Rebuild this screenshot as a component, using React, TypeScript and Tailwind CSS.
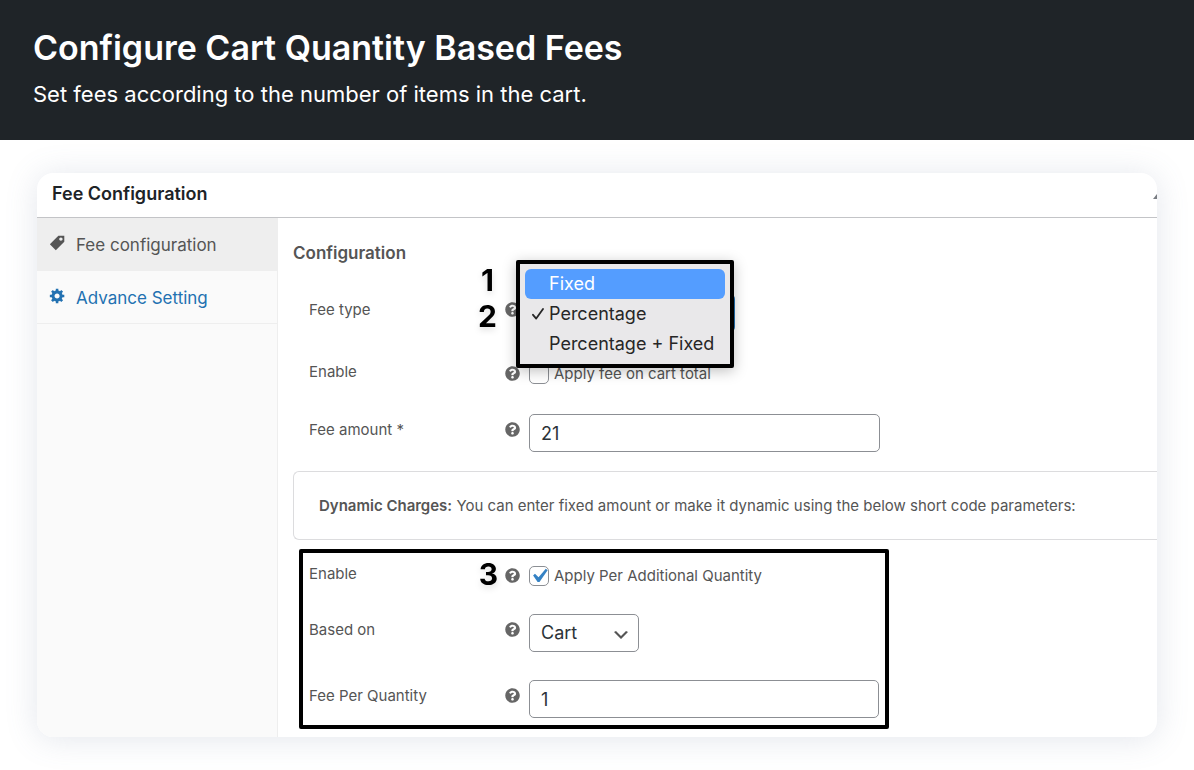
import { ReactNode, useState } from "react";
import clsx from "clsx";
import { FaQuestionCircle } from "react-icons/fa";

interface FieldRowProps {
  label: string;
  htmlFor: string;
  marker?: ReactNode;
  compact?: boolean;
  children: ReactNode;
}

const feeTypes = ["Fixed", "Percentage", "Percentage + Fixed"];

const inputClass =
  "h-[38px] w-[351px] rounded-[5px] border border-[#8c8f94] bg-white px-[11px] text-lg text-[#2c3338]";

function TagIcon() {
  return (
    <svg viewBox="0 0 20 20" className="mb-1.5 size-[17px] fill-current" aria-hidden="true">
      <path d="M11 2h7v7L8 19l-7-7L11 2zm3 6c1.1 0 2-.9 2-2s-.9-2-2-2-2 .9-2 2 .9 2 2 2z" />
    </svg>
  );
}

function GearIcon() {
  return (
    <svg viewBox="0 0 20 20" className="mb-1.5 size-[17px] fill-current" aria-hidden="true">
      <path d="M18 12h-2.18c-.17.7-.44 1.35-.81 1.93l1.54 1.54-2.1 2.1-1.54-1.54c-.58.36-1.23.63-1.91.79V19H8v-2.18c-.68-.16-1.33-.43-1.91-.79l-1.54 1.54-2.12-2.12 1.54-1.54c-.36-.58-.63-1.23-.79-1.91H1V9.03h2.17c.16-.7.44-1.35.8-1.94L2.43 5.55l2.1-2.1 1.54 1.54c.58-.37 1.24-.64 1.93-.81V2h3v2.18c.68.16 1.33.43 1.91.79l1.54-1.54 2.12 2.12-1.54 1.54c.36.59.64 1.24.8 1.94H18V12zm-8.5 1.5c1.66 0 3-1.34 3-3s-1.34-3-3-3-3 1.34-3 3 1.34 3 3 3z" />
    </svg>
  );
}

function FieldRow({ label, htmlFor, marker, compact, children }: FieldRowProps) {
  return (
    <div className="flex items-start">
      <label
        htmlFor={htmlFor}
        className={clsx("w-[170px] shrink-0 text-[15px] leading-5", !compact && "mt-1.5")}
      >
        {label}
      </label>
      <div className="relative w-[26px] shrink-0">{marker}</div>
      <FaQuestionCircle
        className={clsx("mr-[9px] size-[15px] shrink-0 text-[#666]", compact ? "mt-1" : "mt-2")}
      />
      {children}
    </div>
  );
}

function Marker({ children }: { children: ReactNode }) {
  return (
    <span className="block text-3xl leading-9 font-bold text-black drop-shadow-md">{children}</span>
  );
}

function CheckField({ id, text, defaultChecked }: { id: string; text: string; defaultChecked?: boolean }) {
  return (
    <div className="flex items-center gap-[5px] pt-0.5">
      <span className="relative flex">
        <input
          id={id}
          type="checkbox"
          defaultChecked={defaultChecked}
          className="peer size-5 appearance-none rounded-[5px] border border-[#8c8f94] bg-white"
        />
        <svg
          viewBox="0 0 20 20"
          className="pointer-events-none absolute -top-1 -left-1 hidden size-7 fill-[#3582c4] peer-checked:block"
          aria-hidden="true"
        >
          <path d="M14.83 4.89l1.34.94-5.81 8.38H9.02L5.78 9.67l1.34-1.25 2.57 2.4z" />
        </svg>
      </span>
      <label htmlFor={id} className="text-[15px] leading-5">
        {text}
      </label>
    </div>
  );
}

function FeeTypeMenu({ value, onChange }: { value: string; onChange: (type: string) => void }) {
  return (
    <ul className="absolute -top-[34px] -left-[13px] z-10 w-[218px] rounded-xs border-4 border-black bg-[#e9e8ea] p-[5px] shadow-[0_3px_14px_rgba(0,0,0,0.25)]">
      {feeTypes.map((type) => (
        <li key={type}>
          <button
            type="button"
            onClick={() => onChange(type)}
            className={clsx(
              "relative flex h-[30px] w-full items-center rounded-md pl-6 text-left text-lg whitespace-nowrap",
              type === "Fixed" ? "bg-[#549dff] text-white" : "text-[#262626]"
            )}
          >
            {type === value && (
              <svg viewBox="0 0 12 12" className="absolute left-[7px] size-3" aria-hidden="true">
                <path
                  d="M1 6.8 4.2 10.6 11 1"
                  fill="none"
                  stroke="currentColor"
                  strokeWidth="1.8"
                  strokeLinecap="round"
                  strokeLinejoin="round"
                />
              </svg>
            )}
            {type}
          </button>
        </li>
      ))}
    </ul>
  );
}

export default function App() {
  const [feeType, setFeeType] = useState("Percentage");

  return (
    <div className="bg-white font-['Inter','Liberation_Sans',sans-serif] text-[#50575e]">
      <header className="bg-[#1f2428] px-[33px] pt-6 pb-7 text-white">
        <h1 className="text-[34px] leading-[48px] font-semibold">Configure Cart Quantity Based Fees</h1>
        <p className="mt-1 text-[22px] leading-9">Set fees according to the number of items in the cart.</p>
      </header>

      <main className="px-[37px] py-[33px]">
        <section className="overflow-hidden rounded-2xl bg-white shadow-[0_2px_32px_rgba(100,115,150,0.18)]">
          <div className="flex h-[45px] items-center justify-between border-b border-[#c3c4c7] pl-[15px]">
            <h2 className="pb-0.5 text-lg font-semibold text-[#1d2327]">Fee Configuration</h2>
            <svg viewBox="0 0 4 6" className="mt-1 h-1.5 w-1 fill-[#787c82]" aria-hidden="true">
              <path d="M4 0v5H0z" />
            </svg>
          </div>

          <div className="flex items-stretch">
            <nav className="w-[241px] shrink-0 border-r border-[#eee] bg-[#fafafa] text-[17px]">
              <a
                href="#fee"
                className="flex h-[53px] items-center gap-2.5 border-b border-[#eee] bg-[#eee] pt-[3px] pl-3 text-[#555]"
              >
                <TagIcon />
                Fee configuration
              </a>
              <a
                href="#advance"
                className="flex h-[53px] items-center gap-2.5 border-b border-[#eee] pt-[3px] pl-3 text-[#2271b1]"
              >
                <GearIcon />
                Advance Setting
              </a>
            </nav>

            <form className="min-w-0 flex-1 pt-[25px] pb-2 pl-[15px] text-[#555]">
              <h3 className="text-[17px] leading-5 font-semibold">Configuration</h3>

              <div className="mt-[31px] flex flex-col gap-[30px] pl-4">
                <FieldRow
                  label="Fee type"
                  htmlFor="fee-type"
                  marker={
                    <div className="absolute -top-8 right-2 text-center">
                      <Marker>1</Marker>
                      <Marker>2</Marker>
                    </div>
                  }
                >
                  <div className="relative">
                    <select
                      id="fee-type"
                      value={feeType}
                      onChange={(e) => setFeeType(e.target.value)}
                      className="h-[38px] w-[206px] appearance-none rounded-[5px] border-2 border-[#2271b1] bg-white px-[11px] text-lg"
                    >
                      {feeTypes.map((type) => (
                        <option key={type}>{type}</option>
                      ))}
                    </select>
                    <FeeTypeMenu value={feeType} onChange={setFeeType} />
                  </div>
                </FieldRow>

                <FieldRow label="Enable" htmlFor="cart-total" compact>
                  <CheckField id="cart-total" text="Apply fee on cart total" />
                </FieldRow>

                <FieldRow label="Fee amount *" htmlFor="fee-amount">
                  <input id="fee-amount" type="text" defaultValue="21" className={inputClass} />
                </FieldRow>
              </div>

              <p className="mt-[19px] flex h-[69px] items-center rounded-l-md border border-r-0 border-[#dcdcde] pt-0.5 pl-[25px] text-[15px]">
                <span>
                  <strong className="font-semibold">Dynamic Charges:</strong> You can enter fixed amount or make it
                  dynamic using the below short code parameters:
                </span>
              </p>

              <div className="mt-[9px] ml-1.5 flex w-[590px] flex-col gap-7 rounded-xs border-4 border-black px-1.5 pt-[11px] pb-[7px]">
                <FieldRow
                  label="Enable"
                  htmlFor="per-quantity"
                  compact
                  marker={
                    <div className="absolute -top-2 right-[7px]">
                      <Marker>3</Marker>
                    </div>
                  }
                >
                  <CheckField id="per-quantity" text="Apply Per Additional Quantity" defaultChecked />
                </FieldRow>

                <FieldRow label="Based on" htmlFor="based-on">
                  <div className="relative">
                    <select
                      id="based-on"
                      className="h-[38px] w-[110px] appearance-none rounded-[5px] border border-[#8c8f94] bg-white px-[11px] text-lg text-[#2c3338]"
                    >
                      <option>Cart</option>
                      <option>Product</option>
                    </select>
                    <svg
                      viewBox="0 0 20 20"
                      className="pointer-events-none absolute top-[11px] right-2 size-5 fill-[#555]"
                      aria-hidden="true"
                    >
                      <path d="M5 6l5 5 5-5 2 1-7 7-7-7 2-1z" />
                    </svg>
                  </div>
                </FieldRow>

                <FieldRow label="Fee Per Quantity" htmlFor="fee-per-quantity">
                  <input id="fee-per-quantity" type="text" defaultValue="1" className={inputClass} />
                </FieldRow>
              </div>
            </form>
          </div>
        </section>
      </main>
    </div>
  );
}
